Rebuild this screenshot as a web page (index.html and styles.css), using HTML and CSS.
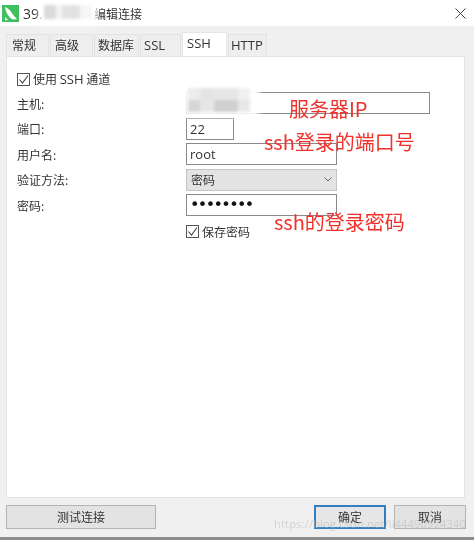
FILE: index.html
```html
<!DOCTYPE html>
<html lang="zh-CN">
<head>
  <meta charset="UTF-8" />
  <title>编辑连接</title>
  <link rel="stylesheet" href="styles.css">
</head>
<body>
  <div class="dialog">

    <!-- TITLE BAR -->
    <div class="titlebar">
      <svg class="logo" width="17" height="17" viewBox="0 0 17 17">
        <rect width="17" height="17" fill="#3ec060"/>
        <path d="M3 2 C6 3 8 5 9.5 7.5 C11 10 13 12 15 14 C11.5 15 9 14 7 11.5 C5 9 3.5 5.5 3 2Z" fill="#fff"/>
        <path d="M3 12 L6 15 L3 15.5Z" fill="#fff"/>
      </svg>
      <span class="title title-ip">39.</span>
      <span class="title title-name">编辑连接</span>
      <svg class="close" width="11" height="11" viewBox="0 0 11 11">
        <path d="M0.5 0.5 L10.5 10.5 M10.5 0.5 L0.5 10.5" stroke="#444" stroke-width="1" fill="none"/>
      </svg>
    </div>

    <!-- TABS -->
    <div class="tabs">
      <div class="tab tab-general">常规</div>
      <div class="tab tab-adv">高级</div>
      <div class="tab tab-db">数据库</div>
      <div class="tab tab-ssl">SSL</div>
      <div class="tab tab-active">SSH</div>
      <div class="tab tab-http">HTTP</div>
    </div>

    <!-- PANEL -->
    <div class="panel">
      <label class="check check-tunnel">
        <span class="box">
          <svg width="11" height="11" viewBox="0 0 11 11"><path d="M1.5 5.5 L4.5 9 L10 1.5" stroke="#444" stroke-width="1.1" fill="none"/></svg>
        </span>
        <span>使用 <span class="latin">SSH</span> 通道</span>
      </label>

      <div class="form">
        <div class="label">主机:</div>
        <div class="input input-host"></div>

        <div class="label">端口:</div>
        <div class="input input-port">22</div>

        <div class="label">用户名:</div>
        <div class="input input-mid">root</div>

        <div class="label">验证方法:</div>
        <div class="select">
          <span>密码</span>
          <svg width="8" height="5" viewBox="0 0 8 5"><path d="M0.5 0.5 L4 4 L7.5 0.5" stroke="#666" stroke-width="1" fill="none"/></svg>
        </div>

        <div class="label">密码:</div>
        <div class="input input-mid input-pass">••••••••</div>

        <div></div>
        <label class="check check-save">
          <span class="box">
            <svg width="11" height="11" viewBox="0 0 11 11"><path d="M1.5 5.5 L4.5 9 L10 1.5" stroke="#444" stroke-width="1.1" fill="none"/></svg>
          </span>
          <span>保存密码</span>
        </label>
      </div>
    </div>

    <!-- BUTTONS -->
    <div class="actions">
      <div class="btn btn-test">测试连接</div>
      <div class="actions-right">
        <div class="btn btn-ok">确定</div>
        <div class="btn btn-cancel">取消</div>
      </div>
    </div>
    <div class="bottom-line"></div>

    <!-- things lying over the dialog -->
    <div class="smudge smudge-title"></div>
    <div class="smudge smudge-host"></div>
    <div class="note note-ip">服务器IP</div>
    <div class="note note-port">ssh登录的端口号</div>
    <div class="note note-pass">ssh的登录密码</div>
    <div class="watermark">https://blog.csdn.net/li44490924340</div>
  </div>
</body>
</html>
```

FILE: styles.css
```css
* {
  box-sizing: border-box;
}

html, body {
  margin: 0;
  padding: 0;
}

body {
  font-family: "Noto Sans CJK SC", "Open Sans", sans-serif;
  font-size: 12px;
  color: #333;
  background: #f0f0f0;
}

/* the reference is a soft, rescaled capture */
.dialog {
  position: relative;
  width: 474px;
  height: 540px;
  overflow: hidden;
  display: flex;
  flex-direction: column;
  background: #f0f0f0;
  filter: blur(0.4px);
}

/* TITLE BAR */
.titlebar {
  height: 26px;
  flex: none;
  background: #fff;
  display: flex;
  align-items: center;
  padding: 0 0 0 2px;
}

.logo {
  flex: none;
  margin-top: 1px;
}

.title {
  font-size: 12px;
  color: #333;
}

.title-ip {
  font-family: "Open Sans", sans-serif;
  font-size: 14px;
  margin-left: 4px;
  width: 71px;
}

.close {
  margin-left: auto;
  margin-right: 8px;
}

/* TABS */
.tabs {
  height: 30px;
  flex: none;
  display: flex;
  align-items: flex-end;
  padding-left: 6px;
  gap: 1px;
}

.tab {
  height: 22px;
  line-height: 21px;
  background: #eeeeee;
  border: 1px solid #e3e3e3;
  border-bottom: none;
  padding-left: 4px;
  font-family: "Open Sans", "Noto Sans CJK SC", sans-serif;
  font-size: 12px;
  color: #333;
}

.tab-general { width: 43px; padding-left: 5px; }
.tab-adv { width: 43px; }
.tab-db { width: 45px; padding-left: 3px; }
.tab-ssl { width: 41px; font-size: 13px; padding-left: 3px; }
.tab-http { width: 39px; font-size: 13px; padding-left: 2px; }

.tab-active {
  width: 45px;
  height: 24px;
  background: #fff;
  font-size: 13px;
  line-height: 20px;
  border-color: #e6e6e6;
}

/* PANEL */
.panel {
  width: 459px;
  height: 442px;
  flex: none;
  margin-left: 6px;
  background: #fff;
  border: 1px solid #e3e3e3;
  padding: 15px 0 0 10px;
}

.check {
  display: flex;
  align-items: center;
  gap: 3px;
  font-size: 12px;
  line-height: 14px;
}

.latin {
  font-family: "Open Sans", sans-serif;
  font-size: 13px;
}

.box {
  width: 13px;
  height: 13px;
  flex: none;
  border: 1px solid #555;
  display: flex;
}

.form {
  display: grid;
  grid-template-columns: 169px auto;
  row-gap: 3.5px;
  justify-items: start;
  align-items: center;
  margin-top: 6px;
}

.label {
  font-size: 12px;
}

.input {
  height: 22px;
  border: 1px solid #8a8a8a;
  background: #fff;
  font-family: "Open Sans", sans-serif;
  font-size: 13px;
  line-height: 20px;
  padding-left: 3px;
}

.input-host { width: 244px; }
.input-port { width: 48px; }
.input-mid { width: 151px; }

.input-pass {
  font-family: "DejaVu Sans", sans-serif;
  font-size: 16px;
  letter-spacing: -1.6px;
  color: #111;
}

.select {
  width: 151px;
  height: 22px;
  border: 1px solid #c4c4c4;
  background: #e3e3e3;
  display: flex;
  align-items: center;
  justify-content: space-between;
  padding: 0 4px 0 4px;
}

.check-save {
  margin-top: 5px;
}

/* BUTTONS */
.actions {
  flex: 1;
  display: flex;
  justify-content: space-between;
  padding: 7px 8px 0 6px;
}

.actions-right {
  display: flex;
  gap: 8px;
}

.btn {
  height: 24px;
  border: 1px solid #b4b4b4;
  background: #e3e3e3;
  text-align: center;
  line-height: 22px;
  font-size: 12px;
}

.btn-test { width: 150px; }
.btn-ok { width: 72px; border: 2px solid #2f7fc1; line-height: 20px; background: #e6e6e6; }
.btn-cancel { width: 72px; }

.bottom-line {
  height: 3px;
  flex: none;
  background: #8d8d8d;
}

/* OVERLAYS */
.smudge {
  position: absolute;
  box-shadow: 0 0 5px 5px #fff;
  filter: blur(1.5px);
}

.smudge-title {
  left: 44px;
  top: 5px;
  width: 48px;
  height: 14px;
  background: linear-gradient(90deg, #dadada 0 12px, #f4f4f4 12px 18px, #e2e2e2 18px 36px, #f6f6f6 36px);
}

.smudge-host {
  left: 188px;
  top: 88px;
  width: 66px;
  height: 24px;
  background:
    linear-gradient(90deg, #d6d6d6 0 12px, #e6e6e6 12px 26px, #d0d0d0 26px 50px, #e8e8e8 50px 62px, #fff 62px) 0 100% / 100% 12px no-repeat,
    linear-gradient(90deg, #ececec 0 12px, #e4e4e4 12px 26px, #e6e6e6 26px 50px, #f0f0f0 50px 62px, #fff 62px) 0 0 / 100% 12px no-repeat;
}

.note {
  position: absolute;
  color: #f0302a;
  font-size: 20px;
  line-height: 24px;
  white-space: nowrap;
}

.note-ip { left: 289px; top: 97px; }
.note-port { left: 264px; top: 130px; }
.note-pass { left: 274px; top: 210px; }

.watermark {
  position: absolute;
  right: 8px;
  top: 516px;
  font-family: "Open Sans", sans-serif;
  font-size: 11px;
  letter-spacing: 0.2px;
  color: rgba(185, 185, 185, 0.55);
  white-space: nowrap;
}
```
